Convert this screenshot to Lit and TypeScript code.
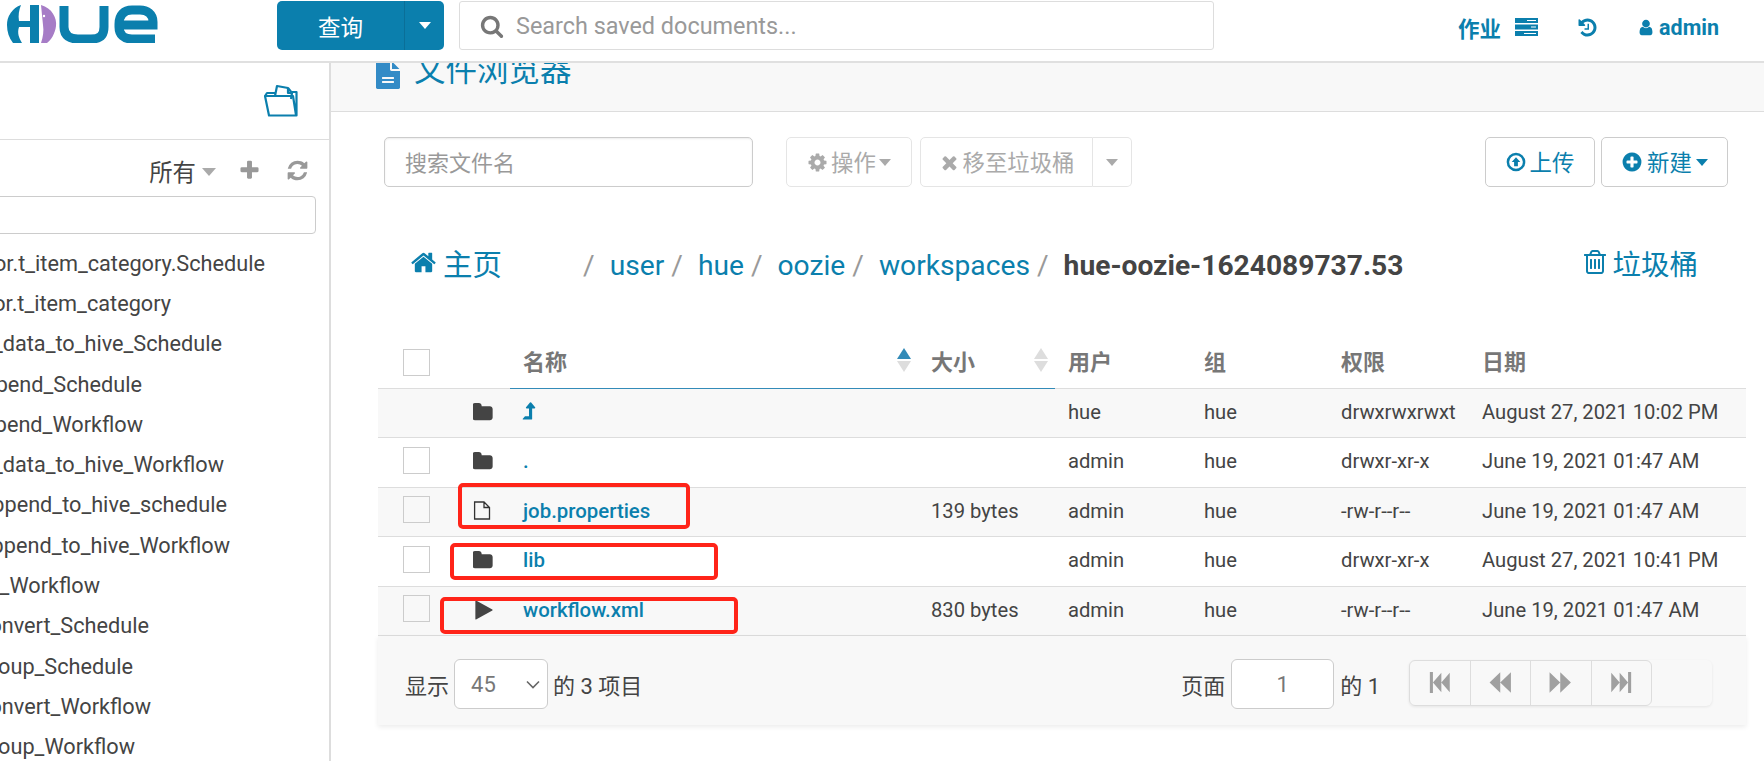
import {css, html, LitElement} from 'lit';
import {customElement} from 'lit/decorators.js';

// FontAwesome 4 style glyphs, all on a 1792 grid
const ICONS: Record<string, string> = {
  search: 'M1216 832q0-185-131.5-316.5t-316.5-131.5-316.5 131.5-131.5 316.5 131.5 316.5 316.5 131.5 316.5-131.5 131.5-316.5zm512 832q0 52-38 90t-90 38q-54 0-90-38l-343-342q-179 124-399 124-143 0-273.5-55.5t-225-150-150-225-55.5-273.5 55.5-273.5 150-225 225-150 273.5-55.5 273.5 55.5 225 150 150 225 55.5 273.5q0 220-124 399l343 343q37 37 37 90z',
  user: 'M1536 1399q0 109-62.5 187t-150.5 78h-854q-88 0-150.5-78t-62.5-187q0-85 8.5-160.5t31.5-152 58.5-131 94-89 134.5-34.5q131 128 313 128t313-128q76 0 134.5 34.5t94 89 58.5 131 31.5 152 8.5 160.5zm-256-887q0 159-112.5 271.5t-271.5 112.5-271.5-112.5-112.5-271.5 112.5-271.5 271.5-112.5 271.5 112.5 112.5 271.5z',
  home: 'M1472 992v480q0 26-19 45t-45 19h-384v-384h-256v384h-384q-26 0-45-19t-19-45v-480q0-1 .5-3t.5-3l575-474 575 474q1 2 1 6zm223-69l-62 74q-8 9-21 11h-3q-13 0-21-7l-692-577-692 577q-12 8-24 7-13-2-21-11l-62-74q-8-10-7-23.5t11-21.5l719-599q32-26 76-26t76 26l244 204v-195q0-14 9-23t23-9h192q14 0 23 9t9 23v408l219 182q10 8 11 21.5t-7 23.5z',
  folder: 'M1600 647v704q0 92-66 158t-158 66h-1216q-92 0-158-66t-66-158v-960q0-92 66-158t158-66h320q92 0 158 66t66 158v32h672q92 0 158 66t66 158z',
  play: 'M1576 927l-1328 738q-23 13-39.5 3t-16.5-36v-1472q0-26 16.5-36t39.5 3l1328 738q23 13 23 31t-23 31z',
  plus: 'M1600 736v192q0 40-28 68t-68 28h-416v416q0 40-28 68t-68 28h-192q-40 0-68-28t-28-68v-416h-416q-40 0-68-28t-28-68v-192q0-40 28-68t68-28h416v-416q0-40 28-68t68-28h192q40 0 68 28t28 68v416h416q40 0 68 28t28 68z',
  refresh: 'M1639 1056q0 5-1 7-64 268-268 434.5t-478 166.5q-146 0-282.5-55t-243.5-157l-129 129q-19 19-45 19t-45-19-19-45v-448q0-26 19-45t45-19h448q26 0 45 19t19 45-19 45l-137 137q71 66 161 102t187 36q134 0 250-65t186-179q11-17 53-117 8-23 30-23h192q13 0 22.5 9.5t9.5 22.5zm25-800v448q0 26-19 45t-45 19h-448q-26 0-45-19t-19-45 19-45l138-138q-148-137-349-137-134 0-250 65t-186 179q-11 17-53 117-8 23-30 23h-199q-13 0-22.5-9.5t-9.5-22.5v-7q65-268 270-434.5t480-166.5q146 0 284 55.5t245 156.5l130-129q19-19 45-19t45 19 19 45z',
  times: 'M1490 1322q0 40-28 68l-136 136q-28 28-68 28t-68-28l-294-294-294 294q-28 28-68 28t-68-28l-136-136q-28-28-28-68t28-68l294-294-294-294q-28-28-28-68t28-68l136-136q28-28 68-28t68 28l294 294 294-294q28-28 68-28t68 28l136 136q28 28 28 68t-28 68l-294 294 294 294q28 28 28 68z',
  cog: 'M1152 896q0-106-75-181t-181-75-181 75-75 181 75 181 181 75 181-75 75-181zm512-109v222q0 12-8 23t-20 13l-185 28q-19 54-39 91 35 50 107 138 10 12 10 25t-9 23q-27 37-99 108t-94 71q-12 0-26-9l-138-108q-44 23-91 38-16 136-29 186-7 28-36 28h-222q-14 0-24.5-8.5t-11.5-21.5l-28-184q-49-16-90-37l-141 107q-10 9-25 9-14 0-25-11-126-114-165-168-7-10-7-23 0-12 8-23 15-21 51-66.5t54-70.5q-27-50-41-99l-183-27q-13-2-21-12.5t-8-23.5v-222q0-12 8-23t19-13l186-28q14-46 39-92-40-57-107-138-10-12-10-24 0-10 9-23 26-36 98.5-107.5t94.5-71.5q13 0 26 10l138 107q44-23 91-38 16-136 29-186 7-28 36-28h222q14 0 24.5 8.5t11.5 21.5l28 184q49 16 90 37l142-107q9-9 24-9 13 0 25 10 129 119 165 170 7 8 7 22 0 12-8 23-15 21-51 66.5t-54 70.5q26 50 41 98l183 28q13 2 21 12.5t8 23.5z',
  trash: 'M704 736v576q0 14-9 23t-23 9h-64q-14 0-23-9t-9-23v-576q0-14 9-23t23-9h64q14 0 23 9t9 23zm256 0v576q0 14-9 23t-23 9h-64q-14 0-23-9t-9-23v-576q0-14 9-23t23-9h64q14 0 23 9t9 23zm256 0v576q0 14-9 23t-23 9h-64q-14 0-23-9t-9-23v-576q0-14 9-23t23-9h64q14 0 23 9t9 23zm128 724v-948h-896v948q0 22 7 40.5t14.5 27 10.5 8.5h832q3 0 10.5-8.5t14.5-27 7-40.5zm-672-1076h448l-48-117q-7-9-17-11h-317q-10 2-17 11zm928 32v64q0 14-9 23t-23 9h-96v948q0 83-47 143.5t-113 60.5h-832q-66 0-113-58.5t-47-141.5v-952h-96q-14 0-23-9t-9-23v-64q0-14 9-23t23-9h309l70-167q15-37 54-63t79-26h320q40 0 79 26t54 63l70 167h309q14 0 23 9t9 23z',
  history: 'M1664 896q0 156-61 298t-164 245-245 164-298 61q-172 0-327-72.5t-264-204.5q-7-10-6.5-22.5t8.5-20.5l137-138q10-9 25-9 16 2 23 12 73 95 179 147t225 52q104 0 198.5-40.5t163.5-109.5 109.5-163.5 40.5-198.5-40.5-198.5-109.5-163.5-163.5-109.5-198.5-40.5q-98 0-188 35.5t-160 101.5l137 138q31 30 14 69-17 40-59 40h-448q-26 0-45-19t-19-45v-448q0-42 40-59 39-17 69 14l130 129q107-101 244.5-156.5t284.5-55.5q156 0 298 61t245 164 164 245 61 298zm-640-288v448q0 14-9 23t-23 9h-320q-14 0-23-9t-9-23v-64q0-14 9-23t23-9h224v-352q0-14 9-23t23-9h64q14 0 23 9t9 23z',
  plusCircle: 'M1344 960v-128q0-26-19-45t-45-19h-256v-256q0-26-19-45t-45-19h-128q-26 0-45 19t-19 45v256h-256q-26 0-45 19t-19 45v128q0 26 19 45t45 19h256v256q0 26 19 45t45 19h128q26 0 45-19t19-45v-256h256q26 0 45-19t19-45zm320-64q0 209-103 385.5t-279.5 279.5-385.5 103-385.5-103-279.5-279.5-103-385.5 103-385.5 279.5-279.5 385.5-103 385.5 103 279.5 279.5 103 385.5z',
  levelUp: 'M1402 565q-18 39-58 39h-192v864q0 14-9 23t-23 9h-704q-21 0-29-18-8-20 4-35l160-192q9-11 25-11h320v-640h-192q-40 0-58-37-17-37 9-68l320-384q18-22 49-22t49 22l320 384q27 32 9 69z',
  fileText: 'M1596 476q14 14 28 36h-472v-472q22 14 36 28zm-476 164h544v1056q0 40-28 68t-68 28h-1344q-40 0-68-28t-28-68v-1600q0-40 28-68t68-28h800v544q0 40 28 68t68 28zm160 736v-64q0-14-9-23t-23-9h-704q-14 0-23 9t-9 23v64q0 14 9 23t23 9h704q14 0 23-9t9-23zm0-256v-64q0-14-9-23t-23-9h-704q-14 0-23 9t-9 23v64q0 14 9 23t23 9h704q14 0 23-9t9-23z',
  first: 'M300 250h190v1292h-190zM490 896L1010 300v1192zM1010 896L1530 300v1192z',
  prev: 'M220 896L880 260v1272zM880 896L1540 260v1272z',
  next: 'M1540 896L880 260v1272zM880 896L220 260v1272z',
  last: 'M1492 250h-190v1292h190zM1302 896L782 300v1192zM782 896L262 300v1192z',
};

const icon = (name: string, cls = '') =>
  html`<svg class="ic ${cls}" viewBox="0 0 1792 1792"><path d=${ICONS[name]}></path></svg>`;

// the list is scrolled sideways in the shot, so each row carries where its text ends
const DOCS = [
  {name: 'vendor.t_item_category.Schedule', end: 265},
  {name: 'vendor.t_item_category', end: 171},
  {name: 'load_data_to_hive_Schedule', end: 222},
  {name: 'append_Schedule', end: 142},
  {name: 'append_Workflow', end: 143},
  {name: 'load_data_to_hive_Workflow', end: 224},
  {name: 'append_to_hive_schedule', end: 227},
  {name: 'append_to_hive_Workflow', end: 230},
  {name: 'clean_Workflow', end: 100},
  {name: 'convert_Schedule', end: 149},
  {name: 'group_Schedule', end: 133},
  {name: 'convert_Workflow', end: 151},
  {name: 'group_Workflow', end: 135},
];

const FILES = [
  {icon: 'folder', name: '', up: true, size: '', user: 'hue', group: 'hue', perm: 'drwxrwxrwxt', date: 'August 27, 2021 10:02 PM', check: false},
  {icon: 'folder', name: '.', size: '', user: 'admin', group: 'hue', perm: 'drwxr-xr-x', date: 'June 19, 2021 01:47 AM', check: true},
  {icon: 'file', name: 'job.properties', size: '139 bytes', user: 'admin', group: 'hue', perm: '-rw-r--r--', date: 'June 19, 2021 01:47 AM', check: true},
  {icon: 'folder', name: 'lib', size: '', user: 'admin', group: 'hue', perm: 'drwxr-xr-x', date: 'August 27, 2021 10:41 PM', check: true},
  {icon: 'play', name: 'workflow.xml', size: '830 bytes', user: 'admin', group: 'hue', perm: '-rw-r--r--', date: 'June 19, 2021 01:47 AM', check: true},
];

@customElement('app-root')
export class AppRoot extends LitElement {
  static styles = css`
    :host {
      display: block;
      position: relative;
      width: 1764px;
      height: 761px;
      overflow: hidden;
      background: #fff;
      color: #444;
      font-family: Roboto, 'Noto Sans CJK SC', sans-serif;
      font-size: 20.2px;
    }

    .ic {
      display: block;
      flex: none;
      fill: currentColor;
    }

    /* top bar */
    .topbar {
      display: flex;
      align-items: flex-start;
      height: 61px;
      border-bottom: 2px solid #e0e0e0;
      box-sizing: content-box;
    }
    .logo {
      width: 170px;
      height: 60px;
      flex: none;
    }
    .query {
      display: flex;
      width: 167px;
      height: 49px;
      margin: 1px 0 0 107px;
      background: #0b7fad;
      border-radius: 5px;
      color: #fff;
      font-size: 22.5px;
      flex: none;
    }
    .query-main {
      width: 127px;
      display: flex;
      align-items: center;
      justify-content: center;
      border-right: 1px solid #0a6f98;
    }
    .query-caret {
      flex: 1;
      display: flex;
      align-items: center;
      justify-content: center;
    }
    .query-caret i {
      border: 6px solid transparent;
      border-top: 7px solid #fff;
      border-bottom: 0;
    }
    .global-search {
      display: flex;
      align-items: center;
      gap: 12px;
      width: 755px;
      height: 49px;
      margin: 1px 0 0 15px;
      padding-left: 20px;
      box-sizing: border-box;
      border: 1px solid #ddd;
      border-radius: 3px;
      color: #999;
      font-size: 23.4px;
      flex: none;
    }
    .global-search .ic {
      width: 24px;
      height: 24px;
      color: #777;
    }
    .nav {
      display: flex;
      align-items: center;
      height: 54px;
      color: #0b7fad;
      font-weight: 700;
      font-size: 21.5px;
      margin-left: 244px;
    }
    .nav-jobs {
      display: flex;
      align-items: center;
      gap: 14px;
      margin-right: 39px;
    }
    .nav-hist {
      width: 21px;
      height: 21px;
      margin-right: 39px;
    }
    .nav-user {
      display: flex;
      align-items: center;
      gap: 4px;
    }
    .nav-user .ic {
      width: 18px;
      height: 21px;
    }

    .page {
      display: flex;
      height: 698px;
    }

    /* left panel */
    .side {
      width: 329px;
      border-right: 2px solid #ddd;
      flex: none;
      overflow: hidden;
    }
    .side-head {
      display: flex;
      justify-content: flex-end;
      height: 77px;
      padding: 21px 31px 0 0;
      box-sizing: border-box;
      border-bottom: 1px solid #ddd;
    }
    .side-head svg {
      width: 35px;
      height: 33px;
      color: #0b7fad;
      fill: none;
      stroke: currentColor;
      stroke-width: 2.2;
      stroke-linejoin: round;
    }
    .side-tools {
      display: flex;
      align-items: center;
      justify-content: flex-end;
      height: 56px;
      padding: 5px 20px 0 0;
      box-sizing: border-box;
      color: #999;
    }
    .side-tools span {
      color: #444;
      font-size: 23.4px;
    }
    .side-tools .caret {
      margin: 2px 22px 0 6px;
      border: 7px solid transparent;
      border-top: 8px solid #aaa;
      border-bottom: 0;
    }
    .side-tools .plus {
      width: 23px;
      height: 23px;
      margin-right: 25px;
    }
    .side-tools .refresh {
      width: 23px;
      height: 23px;
    }
    .side-search {
      width: 326px;
      height: 38px;
      margin-left: -10px;
      box-sizing: border-box;
      border: 1px solid #ccc;
      border-radius: 4px;
    }
    .side-list {
      padding-top: 9px;
    }
    .side-row {
      display: flex;
      justify-content: flex-end;
      align-items: center;
      height: 40.3px;
      font-size: 21.7px;
      white-space: nowrap;
      color: #444;
    }

    /* file browser */
    main {
      flex: 1;
      min-width: 0;
    }
    .title {
      height: 48px;
      box-sizing: content-box;
      border-bottom: 1px solid #ddd;
      background: #f8f8f8;
      overflow: hidden;
      display: flex;
      align-items: flex-start;
      gap: 12px;
      padding-left: 44px;
      color: #0b7fad;
      font-size: 31.5px;
      line-height: 30px;
    }
    .title .ic {
      width: 28px;
      height: 28px;
      margin: -2px 0 0 -1px;
      color: #338bc6;
    }
    .title span {
      margin-top: -7px;
    }
    .toolbar {
      display: flex;
      align-items: flex-start;
      margin-top: 25px;
      padding: 0 36px 0 53px;
    }
    .btn {
      display: flex;
      align-items: center;
      justify-content: center;
      height: 50px;
      box-sizing: border-box;
      border: 1px solid #ccc;
      border-radius: 5px;
      font-size: 22.4px;
      color: #0b7fad;
      background: #fff;
    }
    .btn span {
      margin-bottom: 2px;
    }
    .file-search {
      width: 369px;
      height: 50px;
      box-sizing: border-box;
      display: flex;
      align-items: center;
      padding: 0 0 2px 20px;
      border: 1px solid #ccc;
      border-radius: 5px;
      box-shadow: inset 0 1px 2px rgba(0, 0, 0, 0.08);
      color: #999;
      font-size: 22px;
    }
    .btn.off {
      color: #aaa;
      border-color: #e5e5e5;
      gap: 3px;
    }
    .btn.off .ic {
      width: 21px;
      height: 21px;
    }
    .btn .caret {
      border: 6.5px solid transparent;
      border-top: 7px solid currentColor;
      border-bottom: 0;
    }
    .actions {
      width: 126px;
      margin-left: 33px;
    }
    .trash-group {
      display: flex;
      width: 212px;
      margin-left: 8px;
    }
    .trash-main {
      flex: 1;
      border-radius: 5px 0 0 5px;
    }
    .trash-more {
      width: 39px;
      border-left: 0;
      border-radius: 0 5px 5px 0;
    }
    .upload {
      width: 110px;
      margin-left: auto;
      gap: 4px;
    }
    .upload .ic {
      width: 20px;
      height: 20px;
    }
    .create .ic {
      width: 22px;
      height: 22px;
    }
    .create {
      width: 127px;
      margin-left: 6px;
      gap: 4px;
    }

    .crumbs {
      display: flex;
      align-items: center;
      height: 50px;
      margin-top: 53px;
      padding: 0 66px 0 79px;
      color: #0b7fad;
      font-size: 28.2px;
      white-space: nowrap;
    }
    .crumb-home {
      display: flex;
      align-items: center;
      gap: 6px;
      width: 173px;
      padding-bottom: 6px;
      font-size: 29.5px;
    }
    .crumb-home .ic {
      width: 27px;
      height: 27px;
    }
    .sep {
      color: #999;
      margin: 0 15px 0 7px;
    }
    .crumb-home + .sep {
      margin-left: 0;
    }
    .crumb-current {
      font-weight: 700;
      color: #444;
    }
    .crumb-trash {
      display: flex;
      align-items: center;
      gap: 3px;
      margin-left: auto;
      padding-bottom: 6px;
      font-size: 28.5px;
    }
    .crumb-trash .ic {
      width: 28px;
      height: 28px;
    }

    .files {
      margin: 47px 18px 0 47px;
    }
    .row {
      display: grid;
      grid-template-columns: 95px 37px 408px 137px 136px 137px 141px 277px;
      align-items: center;
      height: 49.5px;
      box-sizing: border-box;
      border-bottom: 1px solid #ddd;
      padding-bottom: 2px;
    }
    .row.alt {
      background: #f8f8f8;
    }
    .row.head {
      height: 51.5px;
      padding-bottom: 0;
      align-items: stretch;
      font-size: 22px;
      font-weight: 700;
      color: #777;
    }
    .cell {
      padding-left: 13px;
      white-space: nowrap;
    }
    .head .cell {
      display: flex;
      align-items: center;
      padding-bottom: 5px;
    }
    .head .sorted {
      justify-content: space-between;
      border-bottom: 1px solid #338bb8;
      margin-bottom: -1px;
      padding-right: 7px;
    }
    .sort {
      display: flex;
      flex-direction: column;
      gap: 2px;
    }
    .sort i {
      border: 7px solid transparent;
      border-top: 0;
      border-bottom: 11px solid #ddd;
    }
    .sort i + i {
      border-top: 11px solid #ddd;
      border-bottom: 0;
    }
    .sort.asc i:first-child {
      border-bottom-color: #338bb8;
    }
    .check {
      display: block;
      width: 27px;
      height: 27px;
      margin-left: 25px;
      box-sizing: border-box;
      border: 1px solid #ccc;
      background: #fff;
    }
    .row .check {
      margin-top: -2px;
    }
    .row.head .check {
      align-self: center;
      margin-top: 0;
    }
    .row.alt .check {
      background: #f8f8f8;
    }
    .kind {
      color: #444;
    }
    .kind .ic {
      width: 22px;
      height: 22px;
    }
    .kind .doc {
      width: 19px;
      height: 19px;
      fill: none;
      color: #333;
      stroke: currentColor;
      stroke-width: 1.3;
    }
    .link {
      color: #0b7fad;
      font-size: 20.4px;
      font-weight: 500;
    }
    .link .ic {
      width: 22px;
      height: 22px;
      margin-left: -5px;
    }

    .pager {
      display: flex;
      align-items: center;
      height: 89px;
      padding: 7px 0 0 27px;
      box-sizing: border-box;
      background: #f8f8f8;
      box-shadow: 0 2px 5px rgba(0, 0, 0, 0.08);
      font-size: 22px;
    }
    .field {
      display: flex;
      align-items: center;
      height: 50px;
      box-sizing: border-box;
      background: #fff;
      border: 1px solid #ccc;
      border-radius: 6px;
      color: #777;
      font-size: 22px;
    }
    .page-size {
      width: 94px;
      margin: 0 5px 0 5px;
      padding-left: 16px;
      gap: 30px;
    }
    .page-size svg {
      width: 14px;
      height: 9px;
      fill: none;
      stroke: #666;
      stroke-width: 1.6;
    }
    .page-at {
      width: 103px;
      margin: 0 6px;
      justify-content: center;
    }
    .page-of {
      margin-left: auto;
    }
    .step-wrap {
      display: flex;
      width: 303px;
      margin: -3px 34px 0 29px;
      border-radius: 6px;
      box-shadow: 0 1px 3px rgba(0, 0, 0, 0.08);
    }
    .steps {
      display: flex;
      height: 46px;
      box-sizing: border-box;
      border: 1px solid #ddd;
      border-radius: 6px;
      color: #a0a0a0;
    }
    .steps div {
      display: flex;
      align-items: center;
      justify-content: center;
      width: 59.5px;
      border-left: 1px solid #ddd;
    }
    .steps div:first-child {
      border-left: 0;
    }
    .steps .ic {
      width: 29px;
      height: 29px;
    }

    /* hand-drawn annotation boxes over the screenshot */
    .mark {
      position: absolute;
      box-sizing: border-box;
      border: 4px solid #ff2419;
      border-radius: 5px;
      pointer-events: none;
    }
    .m1 { left: 458px; top: 483px; width: 232px; height: 46px; }
    .m2 { left: 450px; top: 543px; width: 268px; height: 37px; }
    .m3 { left: 440px; top: 597px; width: 298px; height: 37px; }
  `;

  private renderLogo() {
    return html`<svg class="logo" viewBox="0 0 170 60">
      <defs><clipPath id="logo-clip"><rect width="170" height="43"></rect></clipPath></defs>
      <g clip-path="url(#logo-clip)">
        <path fill="#0b7fad" d="M21 5A21 21 0 0 0 7 25C7 32 9 38 13 43H22C19 38 17 33 19 27H30V43H39V5H30V21H19C18 15 19 10 21 5Z"></path>
        <path fill="#a67cc6" d="M41 5C52 8 57 18 56 26C55 34 51 40 47 43H41C43 37 44 31 43 25Z"></path>
        <circle cx="44" cy="16" r="1.200" fill="#fff"></circle>
        <g fill="none" stroke="#0b7fad" stroke-width="9">
          <path d="M64 6V27C64 36 70 39 78 39H91C99 39 104 36 104 27V6"></path>
          <path d="M119 25H153V22C153 14 147 10 140 10H132C124 10 119 15 119 24V27C119 35 124 39 132 39H155"></path>
        </g>
      </g>
    </svg>`;
  }

  private renderTopbar() {
    return html`<header class="topbar">
      ${this.renderLogo()}
      <div class="query">
        <div class="query-main">查询</div>
        <div class="query-caret"><i></i></div>
      </div>
      <div class="global-search">${icon('search')}<span>Search saved documents...</span></div>
      <nav class="nav">
        <div class="nav-jobs">
          <span>作业</span>
          <svg width="23" height="18" viewBox="0 0 23 18" fill="currentColor">
            <path d="M0 0h23v5H0zM0 6.500h23v5H0zM0 13h23v5H0z"></path>
            <path fill="#fff" d="M12 2h9v1h-9zM16 8.500h5v1h-5zM9 15h12v1H9z"></path>
          </svg>
        </div>
        ${icon('history', 'nav-hist')}
        <div class="nav-user">${icon('user')}<span>admin</span></div>
      </nav>
    </header>`;
  }

  private renderSide() {
    return html`<aside class="side">
      <div class="side-head">
        <svg viewBox="0 0 35 33">
          <path d="M2 12L4 9H12"></path>
          <path d="M12 12L14 2L25 4L29 9L28 15" fill="#fff"></path>
          <path d="M25 4V9H29"></path>
          <path d="M29 8H33.500V31.500H6L2 12H30L33 31"></path>
        </svg>
      </div>
      <div class="side-tools">
        <span>所有</span><i class="caret"></i>
        ${icon('plus', 'plus')} ${icon('refresh', 'refresh')}
      </div>
      <div class="side-search"></div>
      <div class="side-list">
        ${DOCS.map((d) => html`<div class="side-row" style="width: ${d.end}px">${d.name}</div>`)}
      </div>
    </aside>`;
  }

  private renderToolbar() {
    return html`<div class="toolbar">
      <div class="file-search">搜索文件名</div>
      <div class="btn off actions">${icon('cog')}<span>操作</span><i class="caret"></i></div>
      <div class="trash-group">
        <div class="btn off trash-main">${icon('times')}<span>移至垃圾桶</span></div>
        <div class="btn off trash-more"><i class="caret"></i></div>
      </div>
      <div class="btn upload">
        <svg class="ic" viewBox="0 0 21 21">
          <circle cx="10.500" cy="10.500" r="8.500" fill="none" stroke="currentColor" stroke-width="2.600"></circle>
          <path d="M10.500 5.500L15 10.500H12.500V15H8.500V10.500H6Z"></path>
        </svg>
        <span>上传</span>
      </div>
      <div class="btn create">${icon('plusCircle')}<span>新建</span><i class="caret"></i></div>
    </div>`;
  }

  private renderCrumbs() {
    const parts = ['user', 'hue', 'oozie', 'workspaces'];
    return html`<div class="crumbs">
      <div class="crumb-home">${icon('home')}<span>主页</span></div>
      ${parts.map((p) => html`<span class="sep">/</span><span>${p}</span>`)}
      <span class="sep">/</span><span class="crumb-current">hue-oozie-1624089737.53</span>
      <div class="crumb-trash">${icon('trash')}<span>垃圾桶</span></div>
    </div>`;
  }

  private renderKind(kind: string) {
    if (kind === 'file') {
      return html`<svg class="ic doc" viewBox="0 0 19 19">
        <path d="M1.600 1H11L16.500 6.500V18H1.600ZM11 1V6.500H16.500"></path>
      </svg>`;
    }
    return icon(kind);
  }

  private renderTable() {
    return html`<div class="files">
      <div class="row head">
        <span class="check"></span>
        <span></span>
        <div class="cell sorted"><span>名称</span><span class="sort asc"><i></i><i></i></span></div>
        <div class="cell sorted"><span>大小</span><span class="sort"><i></i><i></i></span></div>
        <div class="cell">用户</div>
        <div class="cell">组</div>
        <div class="cell">权限</div>
        <div class="cell">日期</div>
      </div>
      ${FILES.map(
        (f, i) => html`<div class="row ${i % 2 === 0 ? 'alt' : ''}">
          ${f.check ? html`<span class="check"></span>` : html`<span></span>`}
          <span class="kind">${this.renderKind(f.icon)}</span>
          <div class="cell link">${f.up ? icon('levelUp') : f.name}</div>
          <div class="cell">${f.size}</div>
          <div class="cell">${f.user}</div>
          <div class="cell">${f.group}</div>
          <div class="cell">${f.perm}</div>
          <div class="cell">${f.date}</div>
        </div>`
      )}
      <div class="pager">
        <span>显示</span>
        <div class="field page-size">
          <span>45</span>
          <svg viewBox="0 0 14 9"><path d="M1 1.500L7 7.500L13 1.500"></path></svg>
        </div>
        <span>的 3 项目</span>
        <span class="page-of">页面</span>
        <div class="field page-at">1</div>
        <span>的 1</span>
        <div class="step-wrap">
          <div class="steps">
            <div>${icon('first')}</div>
            <div>${icon('prev')}</div>
            <div>${icon('next')}</div>
            <div>${icon('last')}</div>
          </div>
        </div>
      </div>
    </div>`;
  }

  render() {
    return html`
      ${this.renderTopbar()}
      <div class="page">
        ${this.renderSide()}
        <main>
          <div class="title">${icon('fileText')}<span>文件浏览器</span></div>
          ${this.renderToolbar()} ${this.renderCrumbs()} ${this.renderTable()}
        </main>
      </div>
      <div class="mark m1"></div>
      <div class="mark m2"></div>
      <div class="mark m3"></div>
    `;
  }
}
